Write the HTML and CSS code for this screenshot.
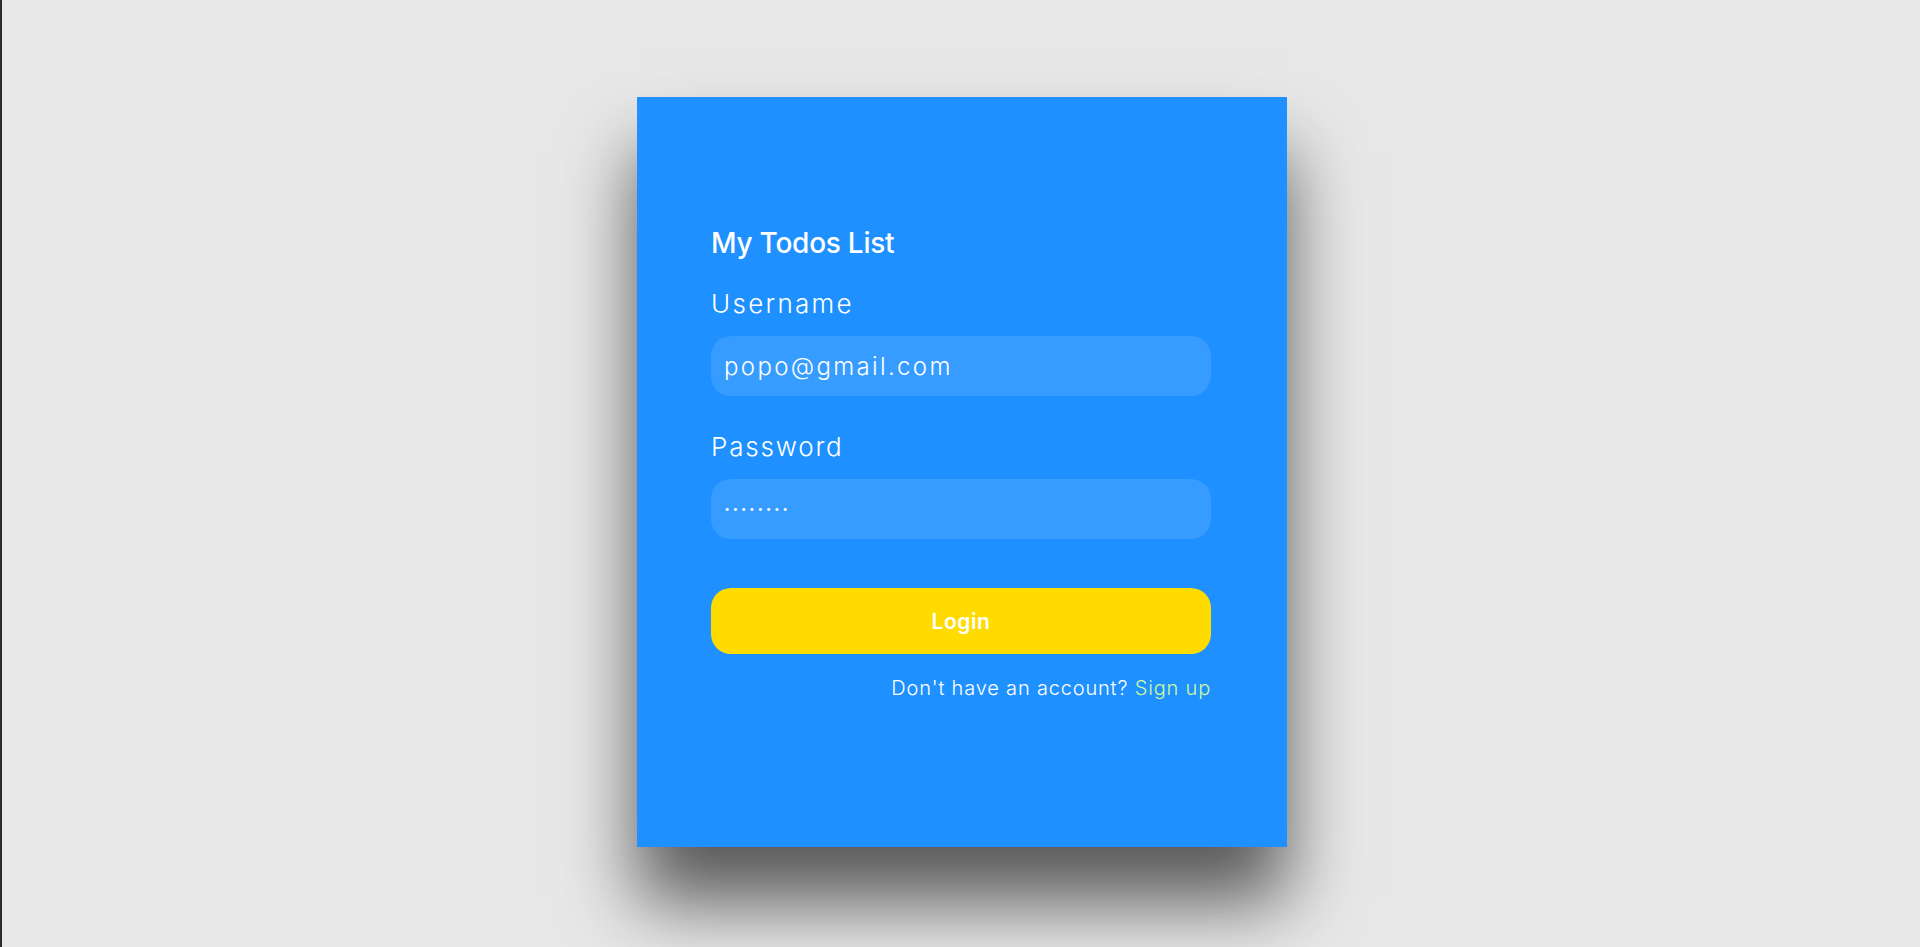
FILE: index.html
```html
<!DOCTYPE html>
<html lang="en">
<head>
<meta charset="utf-8">
<title>My Todos List</title>
<link rel="stylesheet" href="styles.css">
</head>
<body>
<main class="page">
  <section class="card">
    <form class="form">
      <h1 class="title">My Todos List</h1>
      <label class="label" for="username">Username</label>
      <input class="field" id="username" type="text" value="popo@gmail.com">
      <label class="label label-pw" for="password">Password</label>
      <input class="field field-pw" id="password" type="password" value="12345678">
      <button class="btn" type="button">Login</button>
      <p class="footer">Don't have an account? <a class="link" href="#">Sign up</a></p>
    </form>
  </section>
</main>
</body>
</html>
```
FILE: styles.css
```css
* { box-sizing: border-box; }
html, body { margin: 0; padding: 0; }
body {
  background: #e8e8e8;
  border-left: 2px solid #2c2c2c;
  font-family: "Inter", "DejaVu Sans", sans-serif;
  color: #fff;
  height: 100vh;
  overflow: hidden;
}
.page {
  height: 100%;
  display: flex;
  align-items: center;
  justify-content: center;
  padding: 0 0 3px 2px;
}
.card {
  width: 650px;
  height: 750px;
  background: #1e90ff;
  box-shadow: 0 55px 70px rgba(0, 0, 0, 0.62);
  padding: 129px 76px 0 74px;
}
.form {
  display: flex;
  flex-direction: column;
}
.title {
  margin: 0;
  font-size: 28px;
  font-weight: 500;
  line-height: 34px;
  letter-spacing: -0.25px;
}
.label {
  margin-top: 28px;
  font-size: 26px;
  font-weight: 300;
  line-height: 32px;
  letter-spacing: 2.3px;
}
.label-pw { margin-top: 35px; letter-spacing: 1.8px; }
.field {
  margin-top: 16px;
  height: 60px;
  border: none;
  border-radius: 20px;
  background: rgba(255, 255, 255, 0.11);
  color: #fff;
  font-family: inherit;
  font-size: 24px;
  font-weight: 300;
  letter-spacing: 2.35px;
  padding: 0 13px;
  outline: none;
}
.field-pw { font-size: 11px; letter-spacing: 2.1px; }
.btn {
  margin-top: 49px;
  height: 66px;
  border: none;
  border-radius: 20px;
  background: #ffdb00;
  color: #fff;
  font-family: inherit;
  font-size: 21px;
  font-weight: 600;
  letter-spacing: 0.6px;
  cursor: pointer;
}
.footer {
  margin: 22px 0 0;
  text-align: right;
  font-size: 20px;
  font-weight: 300;
  line-height: 24px;
  letter-spacing: 0.82px;
}
.link {
  color: #cdf7a4;
  text-decoration: none;
}
```
